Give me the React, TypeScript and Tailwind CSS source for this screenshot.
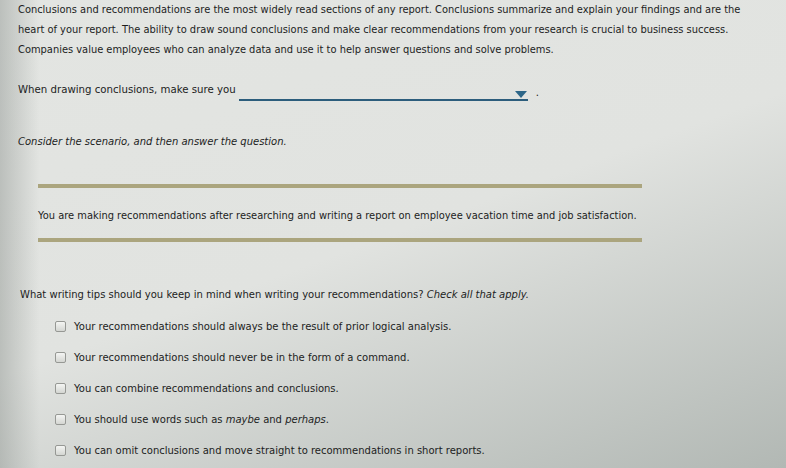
import React from 'react';

const options: React.ReactNode[] = [
  'Your recommendations should always be the result of prior logical analysis.',
  'Your recommendations should never be in the form of a command.',
  'You can combine recommendations and conclusions.',
  <>
    You should use words such as <i>maybe</i> and <i>perhaps</i>.
  </>,
  'You can omit conclusions and move straight to recommendations in short reports.',
];

export default function App() {
  return (
    <div className="w-[786px] h-[468px] overflow-hidden bg-[linear-gradient(to_right,rgba(140,146,142,0.45),rgba(140,146,142,0)_5%),linear-gradient(160deg,#e3e5e2_0%,#e1e3e0_50%,#b2b8b4_100%)] text-[#1c1d1d] text-[10px] leading-[15px] font-['DejaVu_Sans',Verdana,sans-serif]">
      {/* intro paragraph */}
      <p className="pl-[18px] pr-[20px] leading-[20px] text-[9.9px]">
        Conclusions and recommendations are the most widely read sections of any report. Conclusions summarize and
        explain your findings and are the heart of your report. The ability to draw sound conclusions and make clear
        recommendations from your research is crucial to business success. Companies value employees who can analyze
        data and use it to help answer questions and solve problems.
      </p>

      {/* dropdown sentence */}
      <div className="flex items-end pl-[18px] mt-[22px] text-[10.2px]">
        <span className="mb-[4px]">When drawing conclusions, make sure you</span>
        <div className="ml-[3px] w-[289px] h-[19px] border-b-2 border-[#2c5d7c] flex justify-end items-end pr-[1px] pb-[1px]">
          <svg width="12" height="7" viewBox="0 0 12 7">
            <polygon points="0,0 12,0 6,7" fill="#2d6688" />
          </svg>
        </div>
        <span className="ml-[8px] mb-[1px]">.</span>
      </div>

      <p className="pl-[18px] mt-[33px] italic">Consider the scenario, and then answer the question.</p>

      {/* scenario */}
      <div className="ml-[38px] w-[604px] mt-[35px]">
        <div className="h-[4px] bg-[#aba57e]" />
        <p className="mt-[20px] whitespace-nowrap text-[9.9px]">
          You are making recommendations after researching and writing a report on employee vacation time and job
          satisfaction.
        </p>
        <div className="h-[4px] bg-[#aba57e] mt-[15px]" />
      </div>

      {/* question */}
      <p className="pl-[20px] mt-[45px]">
        What writing tips should you keep in mind when writing your recommendations? <i>Check all that apply.</i>
      </p>

      <ul className="pl-[55px] mt-[18px] flex flex-col gap-[19px]">
        {options.map((o, i) => (
          <li key={i} className="flex items-center gap-[8px] h-[12px]">
            <span className="w-[11px] h-[11px] shrink-0 rounded-[2px] border border-[#969894] bg-gradient-to-b from-[#f4f5f3] to-[#d4d6d2]" />
            <span>{o}</span>
          </li>
        ))}
      </ul>
    </div>
  );
}
